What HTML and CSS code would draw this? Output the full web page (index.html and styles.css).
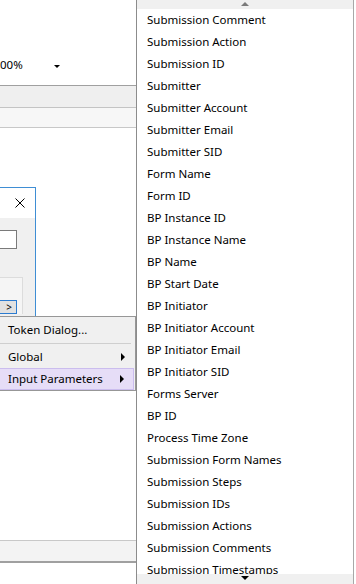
FILE: index.html
```html
<!DOCTYPE html>
<html lang="en">
<head>
  <meta charset="UTF-8">
  <meta name="viewport" content="width=device-width, initial-scale=1.0">
  <title>Token Picker</title>
  <link rel="stylesheet" href="styles.css">
</head>
<body>
  <div class="app">
    <div class="toolbar">
      <span class="zoom">00%</span>
      <span class="caret"></span>
    </div>
    <div class="band band-dark"></div>
    <div class="band band-light"></div>

    <div class="dialog">
      <div class="dialog-title">
        <svg class="close" width="10" height="10" viewBox="0 0 10 10">
          <path d="M0.5 0.5 L9.5 9.5 M9.5 0.5 L0.5 9.5" stroke="#000" stroke-width="1" fill="none"/>
        </svg>
      </div>
      <div class="dialog-body">
        <div class="textbox"></div>
        <div class="panel">
          <button class="more">&gt;</button>
        </div>
      </div>
    </div>

    <div class="menu">
      <div class="menu-item">Token Dialog...</div>
      <div class="menu-sep"></div>
      <div class="menu-item">Global <span class="sub-arrow"></span></div>
      <div class="menu-item active">Input Parameters <span class="sub-arrow"></span></div>
    </div>

    <div class="statusbar"></div>
  </div>

  <div class="dropdown">
    <div class="scroll up"><span class="tri-up"></span></div>
    <ul class="items">
      <li>Submission Comment</li>
      <li>Submission Action</li>
      <li>Submission ID</li>
      <li>Submitter</li>
      <li>Submitter Account</li>
      <li>Submitter Email</li>
      <li>Submitter SID</li>
      <li>Form Name</li>
      <li>Form ID</li>
      <li>BP Instance ID</li>
      <li>BP Instance Name</li>
      <li>BP Name</li>
      <li>BP Start Date</li>
      <li>BP Initiator</li>
      <li>BP Initiator Account</li>
      <li>BP Initiator Email</li>
      <li>BP Initiator SID</li>
      <li>Forms Server</li>
      <li>BP ID</li>
      <li>Process Time Zone</li>
      <li>Submission Form Names</li>
      <li>Submission Steps</li>
      <li>Submission IDs</li>
      <li>Submission Actions</li>
      <li>Submission Comments</li>
      <li>Submission Timestamps</li>
    </ul>
    <div class="scroll down"><span class="tri-down"></span></div>
  </div>
</body>
</html>
```

FILE: styles.css
```css
body {
  margin: 0;
  padding: 0;
  background: #fff;
  font-family: "Noto Sans", "Open Sans", sans-serif;
  font-size: 11.5px;
  color: #000;
  display: flex;
  height: 584px;
  overflow: hidden;
}

/* app behind the popups */
.app {
  width: 136px;
  flex: none;
  display: flex;
  flex-direction: column;
}
.toolbar {
  height: 85px;
  display: flex;
  align-items: center;
  padding-top: 45px;
  box-sizing: border-box;
}
.zoom {
  line-height: 16px;
}
.caret {
  margin-left: 31px;
  margin-top: 2px;
  width: 0;
  height: 0;
  border-left: 3px solid transparent;
  border-right: 3px solid transparent;
  border-top: 3px solid #000;
}
.band-dark {
  border-top: 1px solid #a0a0a0;
  height: 21px;
  background: #efefef;
}
.band-light {
  border-top: 1px solid #c4c4c4;
  border-bottom: 1px solid #c8c8c8;
  height: 19px;
  background: #f7f7f7;
}

/* dialog */
.dialog {
  margin-top: 59px;
  width: 35px;
  border-top: 1px solid #3f8ed4;
  border-right: 1px solid #3f8ed4;
}
.dialog-title {
  height: 30px;
  background: #fff;
  display: flex;
  align-items: center;
  justify-content: flex-end;
  padding-right: 10px;
  box-sizing: border-box;
}
.dialog-body {
  height: 98px;
  background: #f0f0f0;
  padding-top: 12px;
  box-sizing: border-box;
}
.textbox {
  width: 17px;
  height: 19px;
  box-sizing: border-box;
  border: 1px solid #7a7a7a;
  border-left: none;
  background: #fff;
}
.panel {
  margin-top: 28px;
  width: 23px;
  height: 37px;
  box-sizing: border-box;
  border-top: 1px solid #dcdcdc;
  border-right: 1px solid #dcdcdc;
  background: #f5f5f5;
  padding-top: 22px;
}
.more {
  display: block;
  width: 17px;
  height: 14px;
  margin: 0;
  padding: 0 0 0 2px;
  border: 1px solid #2b7bd0;
  border-left: none;
  background: #e1e1e1;
  font-family: "Noto Sans", sans-serif;
  font-size: 10px;
  line-height: 11px;
  color: #000;
}

/* context menu */
.menu {
  width: 136px;
  box-sizing: border-box;
  border: 1px solid #979797;
  border-left: none;
  background: #f0f0f0;
  padding-top: 2px;
}
.menu-item {
  height: 22px;
  line-height: 22px;
  padding-left: 8px;
  display: flex;
  align-items: center;
}
.menu-item.active {
  margin-right: 1px;
  background: #e6ddf7;
  border: 1px solid #cbbdee;
  border-left: none;
  box-sizing: border-box;
}
.menu-sep {
  height: 1px;
  margin: 2px 4px 2px 0;
  background: #cfcfcf;
}
.sub-arrow {
  margin-left: auto;
  margin-right: 10px;
  width: 0;
  height: 0;
  border-top: 4px solid transparent;
  border-bottom: 4px solid transparent;
  border-left: 4px solid #000;
}
.menu-item.active .sub-arrow {
  margin-right: 9px;
}

.statusbar {
  margin-top: 149px;
  border-top: 1px solid #c8c8c8;
  border-bottom: 2px solid #a0a0a0;
  height: 20px;
  background: #f3f3f3;
}

/* dropdown list */
.dropdown {
  width: 218px;
  flex: none;
  box-sizing: border-box;
  border-left: 1px solid #8c8c8c;
  border-right: 1px solid #a8a8a8;
  display: flex;
  flex-direction: column;
  background: #fff;
}
.scroll {
  background: #f0f0f0;
  display: flex;
  justify-content: center;
  flex: none;
  box-sizing: border-box;
  padding-top: 2px;
}
.scroll.up {
  height: 9px;
}
.scroll.down {
  height: 10px;
}
.tri-up {
  width: 0;
  height: 0;
  border-left: 4px solid transparent;
  border-right: 4px solid transparent;
  border-bottom: 4px solid #7a7a7a;
}
.tri-down {
  width: 0;
  height: 0;
  border-left: 4px solid transparent;
  border-right: 4px solid transparent;
  border-top: 4px solid #000;
}
.items {
  list-style: none;
  margin: 0;
  padding: 0;
  flex: 1;
  overflow: hidden;
}
.items li {
  height: 22px;
  line-height: 22px;
  padding-left: 10px;
  white-space: nowrap;
}
```
